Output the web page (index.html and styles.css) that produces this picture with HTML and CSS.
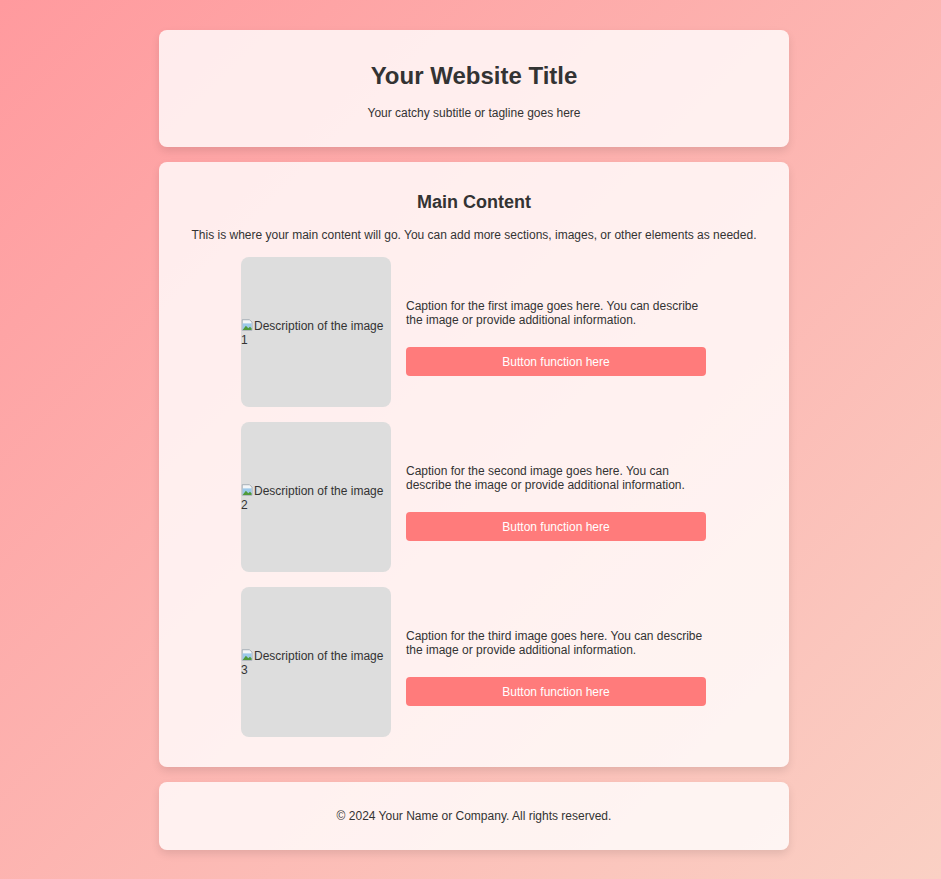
FILE: index.html
```html
<!DOCTYPE html>
<html lang="en">
<head>
<meta charset="utf-8">
<title>Your Website Title</title>
<link rel="stylesheet" href="styles.css">
</head>
<body>
<div class="container">
  <header class="card header">
    <h1>Your Website Title</h1>
    <p>Your catchy subtitle or tagline goes here</p>
  </header>

  <main class="card content">
    <h2>Main Content</h2>
    <p>This is where your main content will go. You can add more sections, images, or other elements as needed.</p>

    <div class="gallery-item">
      <div class="image-box">
        <span class="alt-text"><svg class="broken-icon" viewBox="0 0 16 16" width="16" height="16"><path d="M1.5 1.5h9l3 3v10h-12z" fill="#f4f6f8" stroke="#9aa3ad"/><path d="M2 6h11v8H2z" fill="#9cc9ea"/><path d="M2 14l4-5 3 3 2-2 2 2v2z" fill="#4f9a3b"/></svg>Description of the image 1</span>
      </div>
      <div class="item-text">
        <p>Caption for the first image goes here. You can describe the image or provide additional information.</p>
        <button class="action">Button function here</button>
      </div>
    </div>

    <div class="gallery-item">
      <div class="image-box">
        <span class="alt-text"><svg class="broken-icon" viewBox="0 0 16 16" width="16" height="16"><path d="M1.5 1.5h9l3 3v10h-12z" fill="#f4f6f8" stroke="#9aa3ad"/><path d="M2 6h11v8H2z" fill="#9cc9ea"/><path d="M2 14l4-5 3 3 2-2 2 2v2z" fill="#4f9a3b"/></svg>Description of the image 2</span>
      </div>
      <div class="item-text">
        <p>Caption for the second image goes here. You can describe the image or provide additional information.</p>
        <button class="action">Button function here</button>
      </div>
    </div>

    <div class="gallery-item">
      <div class="image-box">
        <span class="alt-text"><svg class="broken-icon" viewBox="0 0 16 16" width="16" height="16"><path d="M1.5 1.5h9l3 3v10h-12z" fill="#f4f6f8" stroke="#9aa3ad"/><path d="M2 6h11v8H2z" fill="#9cc9ea"/><path d="M2 14l4-5 3 3 2-2 2 2v2z" fill="#4f9a3b"/></svg>Description of the image 3</span>
      </div>
      <div class="item-text">
        <p>Caption for the third image goes here. You can describe the image or provide additional information.</p>
        <button class="action">Button function here</button>
      </div>
    </div>
  </main>

  <footer class="card footer">
    <p>&copy; 2024 Your Name or Company. All rights reserved.</p>
  </footer>
</div>
</body>
</html>
```

FILE: styles.css
```css
* {
  box-sizing: border-box;
}

html, body {
  margin: 0;
}

body {
  min-height: 100vh;
  padding: 30px 13px 29px 20px;
  background: linear-gradient(135deg, #ff9a9e 0%, #fad0c4 100%);
  font-family: "Liberation Sans", Arial, sans-serif;
  font-size: 12px;
  color: #333;
}

.container {
  width: 630px;
  margin: 0 auto;
  display: flex;
  flex-direction: column;
  gap: 15px;
}

.card {
  background: rgba(255, 255, 255, 0.8);
  border-radius: 8px;
  box-shadow: 0 4px 8px rgba(0, 0, 0, 0.1);
  padding: 16px;
  text-align: center;
}

.header {
  padding-bottom: 15px;
}

h1 {
  font-size: 24px;
  margin: 16px 0;
}

h2 {
  font-size: 18px;
  margin: 14px 0 15px;
}

p {
  margin: 12px 0;
}

.content {
  padding-bottom: 15px;
}

.gallery-item {
  display: flex;
  justify-content: center;
  align-items: center;
  gap: 15px;
  margin: 15px 0;
  padding-right: 1px;
  text-align: left;
}

.image-box {
  width: 150px;
  height: 150px;
  flex: none;
  background: #ddd;
  border-radius: 8px;
  display: flex;
  align-items: center;
}

.alt-text {
  display: block;
  line-height: 14px;
}

.broken-icon {
  width: 13px;
  height: 14px;
  vertical-align: -2px;
}

.item-text {
  width: 300px;
}

.item-text p {
  margin: 11px 0 20px;
}

.action {
  display: block;
  width: 100%;
  height: 29px;
  border: none;
  border-radius: 4px;
  background: #ff7b7b;
  color: #fff;
  font-family: inherit;
  font-size: 12px;
  font-weight: normal;
  padding: 0;
}

.footer {
  padding: 15px 16px;
}
```
